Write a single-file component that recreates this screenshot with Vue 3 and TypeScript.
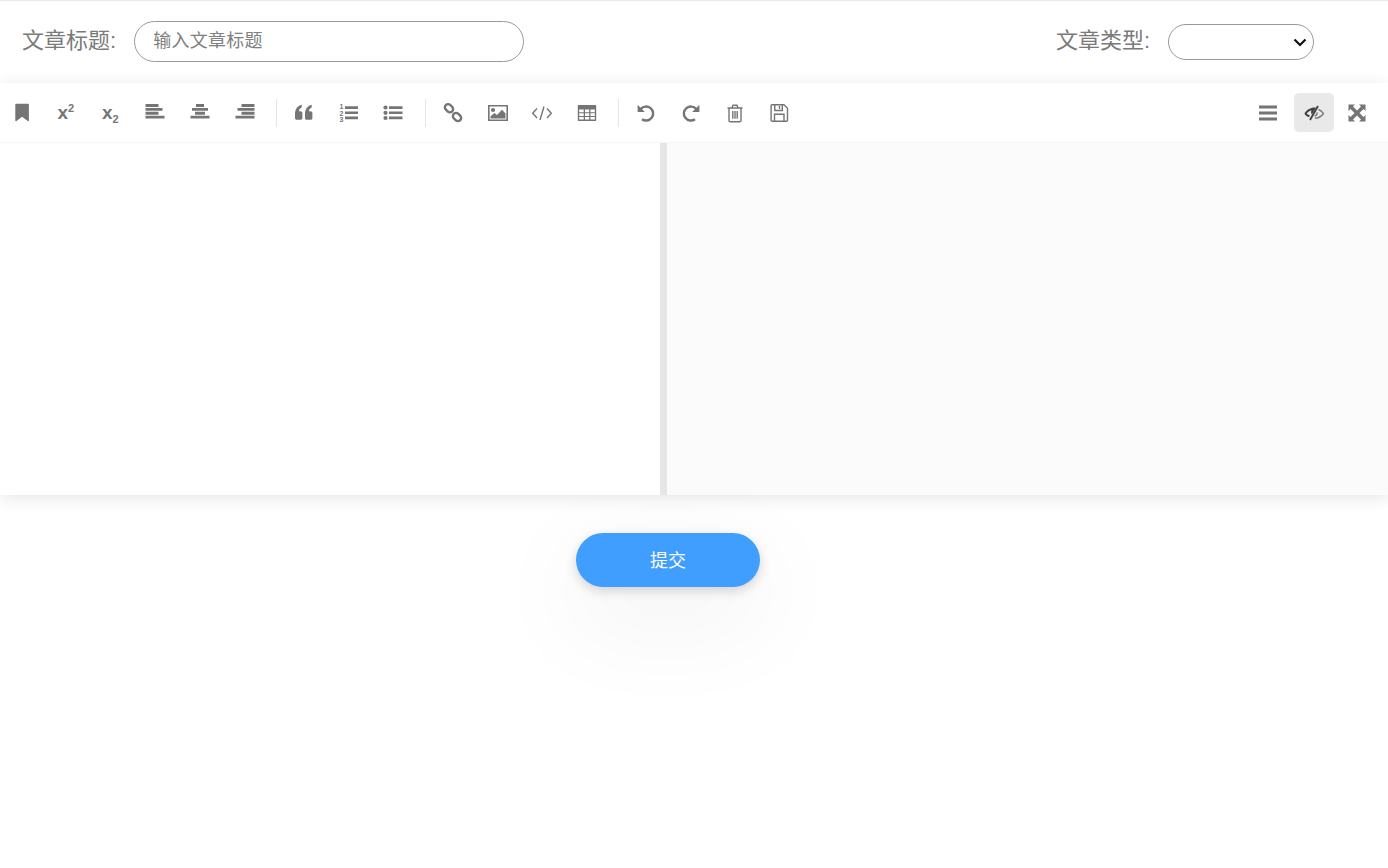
<script setup lang="ts">
const title = ''
</script>

<template>
  <div class="page">
    <header class="meta">
      <label class="field">
        <span class="label">文章标题:</span>
        <input class="title-input" type="text" placeholder="输入文章标题" :value="title" />
      </label>
      <label class="field field-type">
        <span class="label">文章类型:</span>
        <span class="select-wrap">
          <select class="type-select"><option value=""></option></select>
          <svg class="chevron" viewBox="0 0 14 9"><path d="M1.500 1.500 7 7l5.500-5.500"/></svg>
        </span>
      </label>
    </header>

    <section class="editor">
      <div class="toolbar">
        <div class="tools">
          <button class="tool"><svg viewBox="0 0 24 24"><path d="M6.300 2.800h11.600c.6 0 1 .4 1 1v15.600c0 .7-.7 1-1.200.6L12.100 15.800l-5.600 4.200c-.5.4-1.200.1-1.200-.6V3.800c0-.6.400-1 1-1z"/></svg></button>
          <button class="tool"><svg viewBox="0 0 24 24"><text x="3.500" y="18" class="gl-b">x</text><text x="14" y="11" class="gl-s">2</text></svg></button>
          <button class="tool"><svg viewBox="0 0 24 24"><text x="3" y="18" class="gl-b">x</text><text x="13.500" y="21.500" class="gl-s">2</text></svg></button>
          <button class="tool"><svg viewBox="0 0 24 24"><path d="M2.500 3h13v2.900h-13zM2.500 6.900h17v2.900h-17zM2.500 10.800h13v2.900h-13zM2.500 14.700h19v2.900h-19z"/></svg></button>
          <button class="tool"><svg viewBox="0 0 24 24"><path d="M8 3h8v2.900H8zM4 6.900h16v2.900H4zM7 10.800h10v2.900H7zM2.500 14.700h19v2.900h-19z"/></svg></button>
          <button class="tool"><svg viewBox="0 0 24 24"><path d="M8.500 3h13v2.900h-13zM4.500 6.900h17v2.900h-17zM8.500 10.800h13v2.900h-13zM2.500 14.700h19v2.900h-19z"/></svg></button>
          <i class="sep"></i>
          <button class="tool"><svg viewBox="0 0 24 24"><path d="M3 13c0-4.500 2.300-8 6.700-9.200v2.700C7.900 7.300 7 8.600 6.900 10.200h1.700c1 0 1.800.8 1.800 1.800v5c0 1-.8 1.800-1.800 1.800H4.800c-1 0-1.800-.8-1.800-1.800zM13 13c0-4.500 2.300-8 6.700-9.200v2.700c-1.800.8-2.700 2.100-2.800 3.700h1.700c1 0 1.800.8 1.800 1.800v5c0 1-.8 1.800-1.800 1.800h-3.800c-1 0-1.800-.8-1.800-1.800z"/></svg></button>
          <button class="tool"><svg viewBox="0 0 24 24"><text x="2.500" y="7.500" class="gl-n">1</text><text x="2.500" y="14.500" class="gl-n">2</text><text x="2.500" y="21" class="gl-n">3</text><path d="M8 5.200h13v2.700H8zM8 10.400h13v2.700H8zM8 15.600h13v2.700H8z"/></svg></button>
          <button class="tool"><svg viewBox="0 0 24 24"><circle cx="4.500" cy="6.500" r="2.100"/><circle cx="4.500" cy="11.800" r="2.100"/><circle cx="4.500" cy="17" r="2.100"/><path d="M8 5.200h13.500v2.700H8zM8 10.400h13.500v2.700H8zM8 15.600h13.500v2.700H8z"/></svg></button>
          <i class="sep"></i>
          <button class="tool"><svg viewBox="0 0 24 24" class="line"><rect x="3.500" y="4" width="9" height="6.400" rx="3.200" transform="rotate(45 8 7.200)"/><rect x="11.500" y="12.800" width="9" height="6.400" rx="3.200" transform="rotate(45 16 16)"/></svg></button>
          <button class="tool"><svg viewBox="0 0 24 24"><path fill-rule="evenodd" d="M2 4h20v16H2zm1.600 1.600v12.800h16.800V5.600z"/><circle cx="7" cy="9" r="2.100"/><path d="M4.500 17.500v-2.300l4-3.200 2.500 2 5-5.200 3.500 3.800v4.900z"/></svg></button>
          <button class="tool"><svg viewBox="0 0 24 24" class="thin"><path d="M7 7.500 2.700 12.300 7 17M17 7.500l4.300 4.800L17 17M14 5.500 10 19"/></svg></button>
          <button class="tool"><svg viewBox="0 0 24 24"><path fill-rule="evenodd" d="M3.800 4h16.400c.6 0 1 .4 1 1v14c0 .6-.4 1-1 1H3.800c-.6 0-1-.4-1-1V5c0-.6.400-1 1-1zM4.200 8.500v2.700h4.500V8.500zm5.800 0v2.700h4.200V8.500zm5.500 0v2.700h4.300V8.500zM4.200 12.300V15h4.500v-2.700zm5.800 0V15h4.200v-2.700zm5.500 0V15h4.300v-2.700zM4.200 16.100v2.500h4.500v-2.500zm5.800 0v2.500h4.200v-2.500zm5.500 0v2.500h4.300v-2.500z"/></svg></button>
          <i class="sep"></i>
          <button class="tool"><svg viewBox="0 0 24 24" class="line"><path d="M6.800 8A7 7 0 1 1 8 18.200"/><path class="fill" d="M3.600 3.800v7.200h7.200z"/></svg></button>
          <button class="tool"><svg viewBox="0 0 24 24" class="line"><path d="M17.200 8A7 7 0 1 0 16 18.200"/><path class="fill" d="M20.400 3.800v7.200h-7.200z"/></svg></button>
          <button class="tool"><svg viewBox="0 0 24 24" class="thin shift"><path d="M6 7v12.500c0 .7.500 1.200 1.200 1.200h9.600c.7 0 1.200-.5 1.200-1.200V7M4.500 7h15M9 7l1-2.800h4L15 7M9.800 10v7.800M12 10v7.800M14.200 10v7.800"/></svg></button>
          <button class="tool"><svg viewBox="0 0 24 24" class="thin shift"><path d="M5 3.800h12l3.500 3.500v12c0 .5-.4.900-.9.900H5c-.5 0-.9-.4-.9-.9V4.700c0-.5.400-.9.900-.9zM7.800 3.800v5.700h7.500V3.800M12.500 5v3M7.500 20v-6.800h9.500V20"/></svg></button>
        </div>
        <div class="tools">
          <button class="tool"><svg viewBox="0 0 24 24"><path d="M3 4.500h18v3H3zM3 10.500h18v3H3zM3 16.500h18v3H3z"/></svg></button>
          <button class="tool active"><svg viewBox="0 0 24 24"><path class="dark" d="M14 6.600C8.700 6.200 4.800 8.800 2.400 12.400c1 1.600 2.400 2.900 4.300 3.900L8 14.600c-1.200-.6-2.400-1.300-3.200-2.200 1.300-1.500 2.800-2.500 4.600-3.100-.5 1.700-.3 3.300.5 4.300z"/><path class="slash" d="M16 5 8 19"/><path class="thinpath" d="M16.500 8.300c2 .9 3.700 2.300 5 4.200-1.700 2.400-4.800 4.700-8.700 4.700M15 11.300c.3 1.800-.6 3.300-2.300 3.700"/></svg></button>
          <button class="tool"><svg viewBox="0 0 24 24"><path d="M3.500 3.500h6.500L8 5.500l2.500 2.500L12 9.500l1.500-1.500L16 5.500l-2-2h6.500V10l-2-2L16 10.500 14.500 12l1.500 1.500 2.500 2.500 2-2v6.500H14l2-2-2.500-2.500-1.500-1.500-1.500 1.500L8 18.500l2 2H3.500V14l2 2L8 13.500 9.500 12 8 10.500 5.500 8l-2 2z"/></svg></button>
        </div>
      </div>
      <div class="panes">
        <div class="pane-edit"></div>
        <div class="pane-preview"></div>
      </div>
    </section>

    <div class="actions">
      <button class="submit">提交</button>
    </div>
  </div>
</template>

<style>
html, body { margin: 0; background: #fff; }
</style>

<style scoped>
.page {
  min-height: 868px;
  box-sizing: border-box;
  border-top: 1px solid #e9e9e9;
  font-family: "Liberation Sans", "Noto Sans CJK SC", sans-serif;
  background: #fff;
}
.meta {
  height: 82px;
  display: flex;
  align-items: center;
  padding: 0 74px 0 22px;
}
.field { display: flex; align-items: center; }
.field-type { margin-left: auto; }
.label { font-size: 22px; line-height: 26px; color: #7a7a7a; margin: 0 18px 2px 0; }
.title-input {
  width: 390px;
  height: 41px;
  margin-bottom: 1px;
  box-sizing: border-box;
  border: 1px solid #999;
  border-radius: 21px;
  padding: 0 18px;
  font: 18px "Liberation Sans", "Noto Sans CJK SC", sans-serif;
  color: #555;
  outline: none;
  background: #fff;
}
.title-input::placeholder { color: #808080; opacity: 1; letter-spacing: 0.3px; }
.select-wrap { position: relative; display: block; height: 36px; }
.type-select {
  display: block;
  width: 146px;
  height: 36px;
  box-sizing: border-box;
  border: 1px solid #999;
  border-radius: 18px;
  background-color: #fff;
  appearance: none;
  padding: 0 30px 0 12px;
  font-size: 16px;
  outline: none;
}
.chevron {
  position: absolute;
  right: 7px;
  top: 13.500px;
  width: 14px;
  height: 9px;
  fill: none;
  stroke: #111;
  stroke-width: 2.200;
  pointer-events: none;
}
.editor {
  height: 412px;
  display: flex;
  flex-direction: column;
  background: #fff;
  box-shadow: 0 3px 16px rgba(0, 0, 0, 0.1);
  position: relative;
}
.toolbar {
  height: 60px;
  flex: none;
  display: flex;
  justify-content: space-between;
  align-items: center;
  box-sizing: border-box;
  border-bottom: 1px solid #f6f6f6;
  padding: 0 8.700px 0 0;
}
.tools { display: flex; align-items: center; margin-left: -0.600px; }
.tool {
  width: 40px;
  height: 39px;
  margin: 0 2.300px;
  padding: 0;
  border: 0;
  border-radius: 5px;
  background: transparent;
  display: flex;
  align-items: center;
  justify-content: center;
}
.tool.active { background: #e9e9e9; margin: 0 0.800px 0 3.800px; }
.tool svg { width: 24px; height: 24px; fill: #757575; }
.tool svg.shift { margin-left: -2px; }
.tool svg.line { fill: none; stroke: #757575; stroke-width: 2.400; }
.tool svg.line .fill { fill: #757575; stroke: none; }
.tool svg.thin { fill: none; stroke: #757575; stroke-width: 1.400; }
.dark { fill: #404040; }
.slash { fill: none; stroke: #404040; stroke-width: 1.800; }
.thinpath { fill: none; stroke: #757575; stroke-width: 1.300; }
.gl-b { font: bold 19px "Liberation Sans", sans-serif; }
.gl-s { font: bold 11px "Liberation Sans", sans-serif; }
.gl-n { font: bold 7px "Liberation Sans", sans-serif; }
.sep {
  display: block;
  width: 1px;
  height: 28px;
  background: #e5e5e5;
  margin: 0 5px 0 9px;
}
.panes { flex: 1; display: flex; min-height: 0; }
.pane-edit { width: 660px; flex: none; background: #fff; border-right: 7px solid #e6e6e6; }
.pane-preview { flex: 1; background: #fbfbfb; }
.actions { display: flex; justify-content: center; padding: 38px 52px 0 0; }
.submit {
  width: 184px;
  height: 54px;
  padding: 0 0 2px;
  border: 0;
  border-radius: 27px;
  background: #409eff;
  color: #fff;
  font: 18px "Liberation Sans", "Noto Sans CJK SC", sans-serif;
  box-shadow: 0 4px 12px rgba(0, 0, 0, 0.16), 0 30px 100px 10px rgba(0, 0, 0, 0.05);
}
</style>
